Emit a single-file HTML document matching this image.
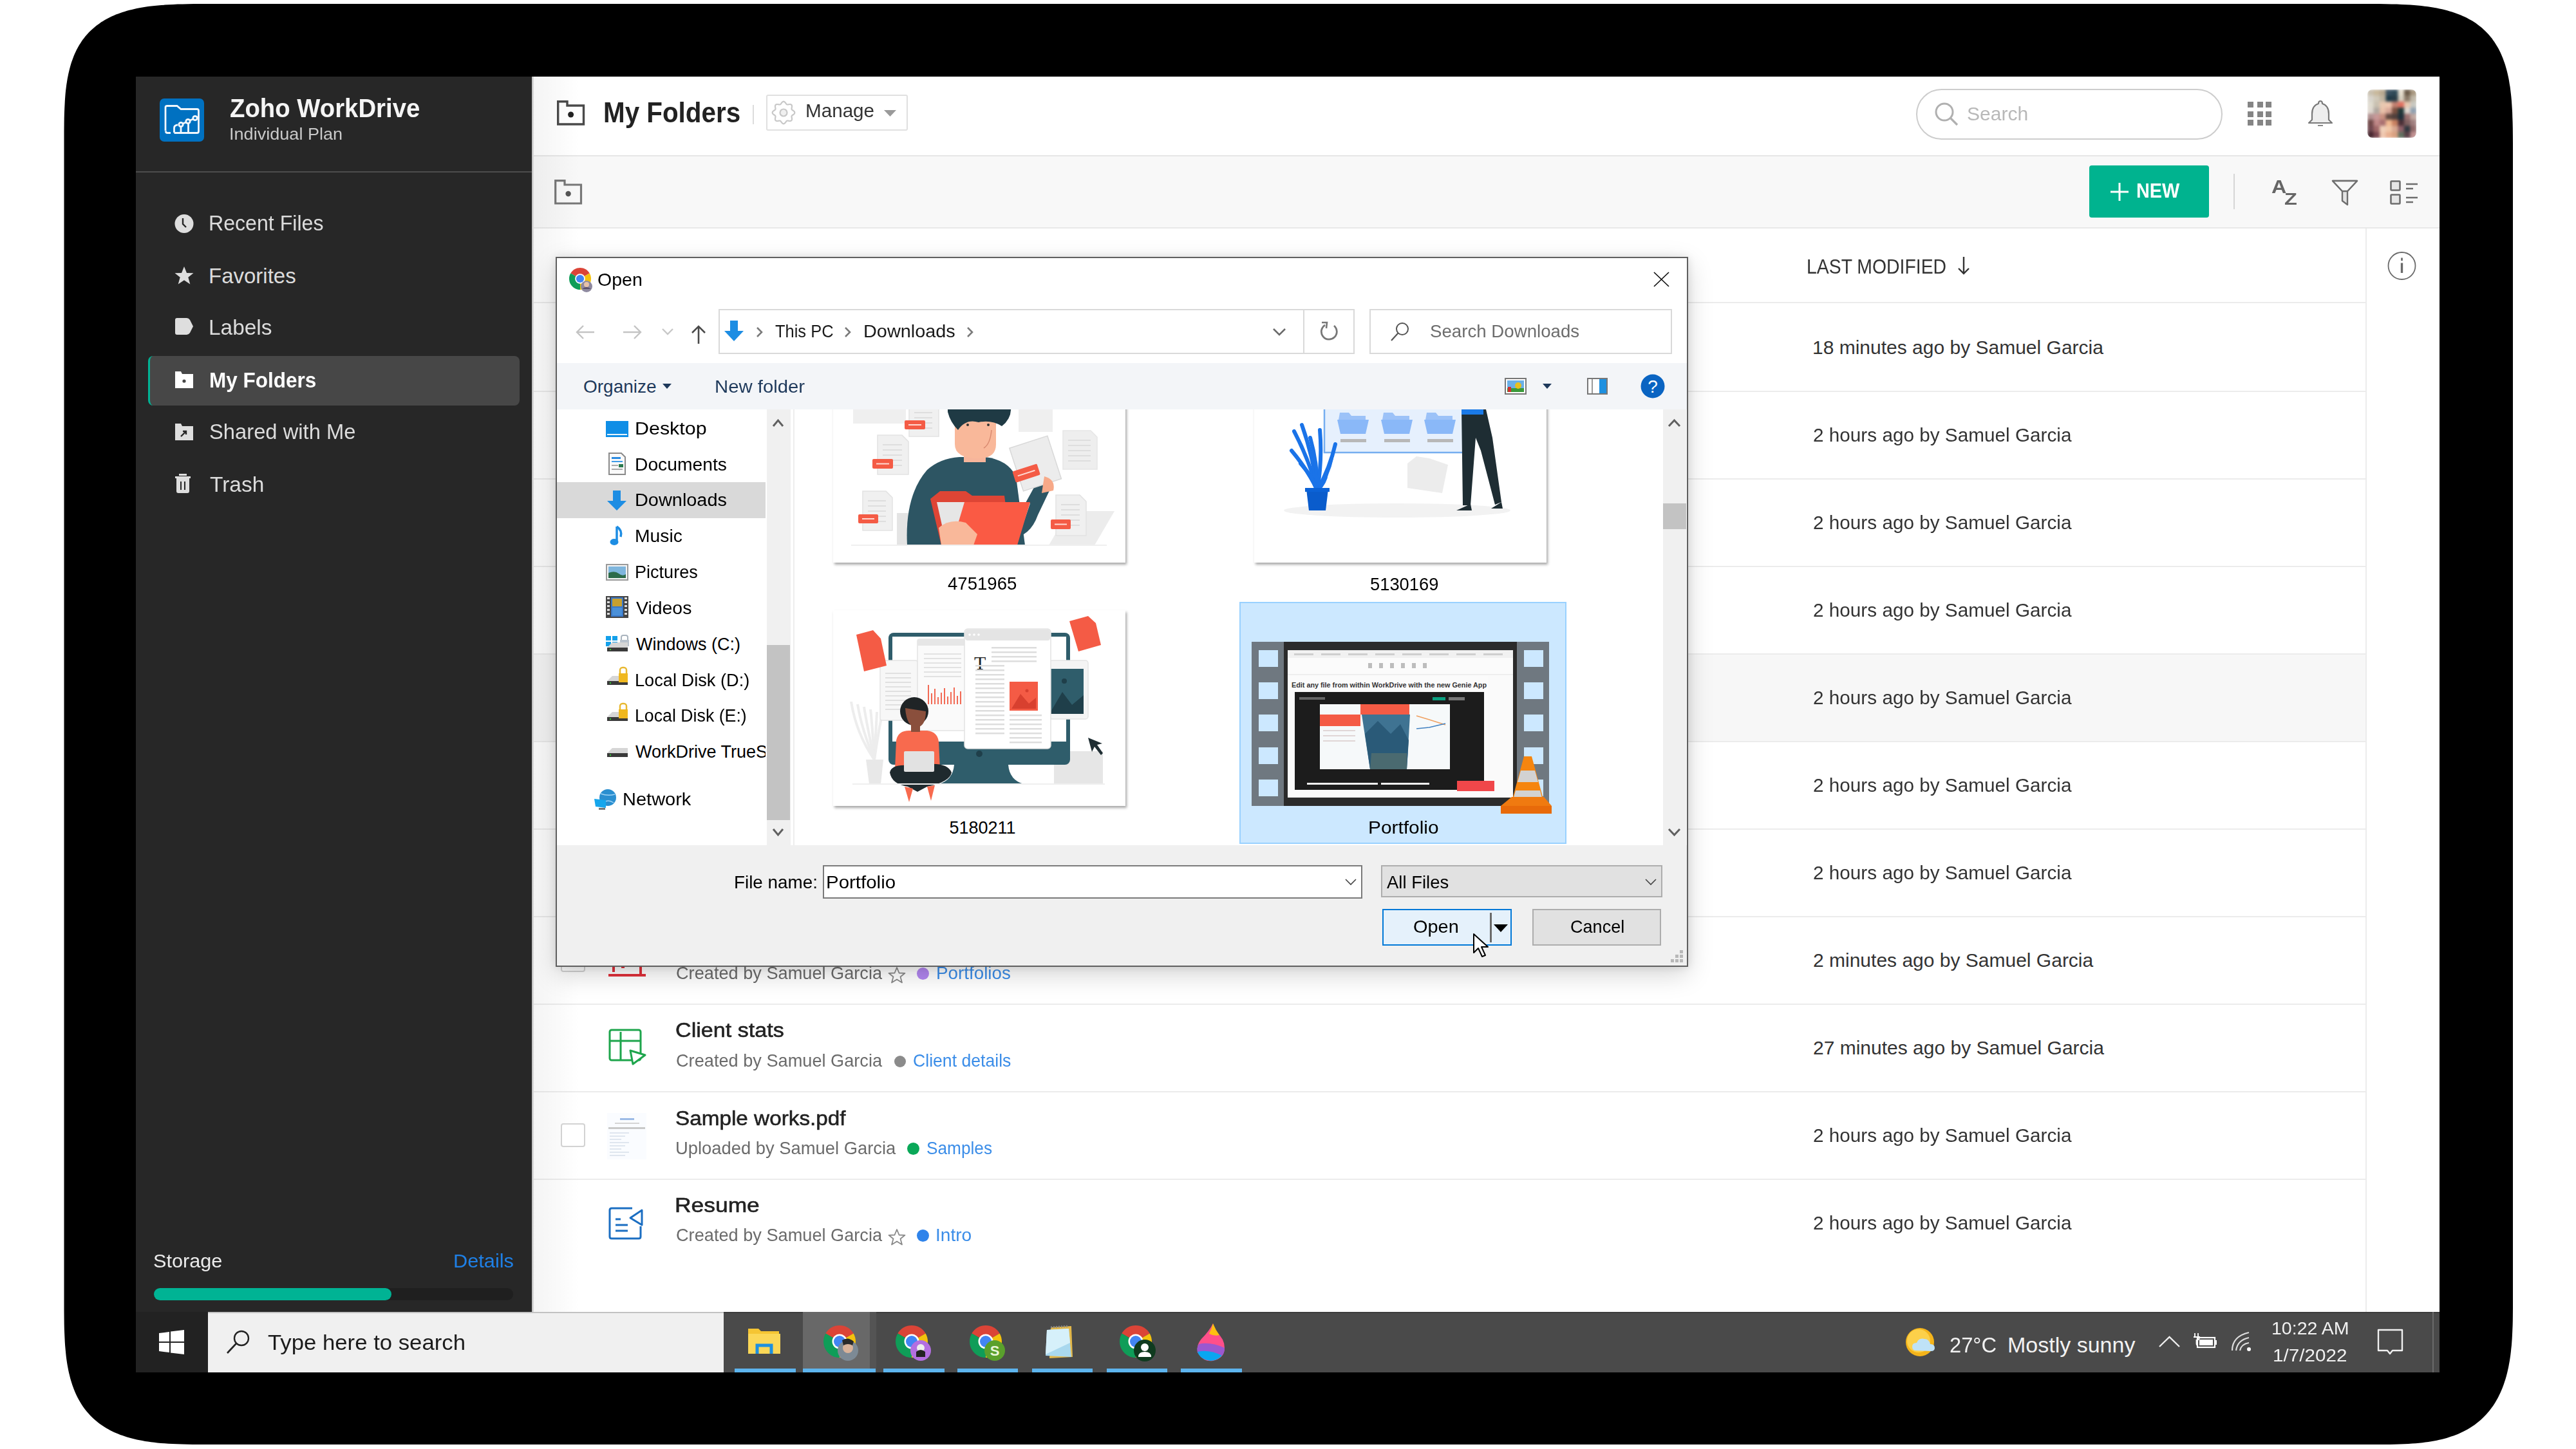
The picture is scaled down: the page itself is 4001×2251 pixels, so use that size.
<!DOCTYPE html>
<html><head><meta charset="utf-8"><title>Zoho WorkDrive - Open</title>
<style>
html,body{margin:0;padding:0;background:#fff;width:4001px;height:2251px;overflow:hidden;}
body{position:relative;font-family:"Liberation Sans",sans-serif;}
.a{position:absolute;}
.t{position:absolute;white-space:nowrap;line-height:1;transform-origin:0 0;}
svg.a{overflow:visible;}
</style></head><body>
<svg class="a" style="left:0px;top:0px;" width="4001" height="2251" viewBox="0 0 4001 2251"><path d="M99.5 228.0 L99.5 204.5 L99.6 193.1 L99.7 184.0 L99.9 176.2 L100.2 169.1 L100.5 162.7 L100.8 156.7 L101.2 151.1 L101.6 145.8 L102.1 140.7 L102.7 135.9 L103.3 131.3 L104.0 126.9 L104.7 122.6 L105.5 118.5 L106.3 114.5 L107.2 110.7 L108.1 106.9 L109.1 103.3 L110.1 99.8 L111.2 96.3 L112.4 93.0 L113.6 89.8 L114.8 86.6 L116.1 83.6 L117.5 80.6 L118.9 77.6 L120.4 74.8 L121.9 72.0 L123.5 69.3 L125.2 66.7 L126.9 64.1 L128.6 61.6 L130.5 59.2 L132.3 56.8 L134.3 54.5 L136.3 52.3 L138.3 50.1 L140.4 48.0 L142.6 45.9 L144.9 43.9 L147.2 41.9 L149.5 40.0 L152.0 38.2 L154.5 36.4 L157.0 34.6 L159.7 33.0 L162.4 31.3 L165.1 29.7 L168.0 28.2 L170.9 26.7 L173.9 25.3 L177.0 24.0 L180.1 22.6 L183.3 21.4 L186.7 20.2 L190.1 19.0 L193.6 17.9 L197.2 16.8 L200.9 15.8 L204.7 14.9 L208.6 13.9 L212.7 13.1 L216.8 12.3 L221.1 11.5 L225.6 10.8 L230.2 10.1 L235.0 9.5 L240.0 9.0 L245.2 8.4 L250.6 8.0 L256.4 7.6 L262.4 7.2 L268.9 6.9 L275.8 6.6 L283.4 6.4 L291.9 6.2 L301.8 6.1 L314.1 6.0 L339.5 6.0 L3651.0 6.0 L3681.1 6.0 L3694.8 6.1 L3705.5 6.2 L3714.7 6.4 L3722.8 6.6 L3730.2 6.9 L3737.1 7.3 L3743.4 7.6 L3749.5 8.1 L3755.2 8.6 L3760.6 9.1 L3765.8 9.7 L3770.8 10.3 L3775.5 11.0 L3780.1 11.8 L3784.6 12.6 L3788.9 13.4 L3793.0 14.3 L3797.0 15.3 L3800.9 16.3 L3804.7 17.4 L3808.4 18.5 L3812.0 19.7 L3815.4 20.9 L3818.8 22.2 L3822.1 23.5 L3825.3 24.9 L3828.4 26.3 L3831.5 27.8 L3834.4 29.4 L3837.3 31.0 L3840.1 32.6 L3842.8 34.3 L3845.5 36.1 L3848.0 38.0 L3850.6 39.9 L3853.0 41.8 L3855.4 43.8 L3857.7 45.9 L3859.9 48.0 L3862.1 50.2 L3864.3 52.5 L3866.3 54.8 L3868.3 57.2 L3870.3 59.6 L3872.1 62.2 L3874.0 64.8 L3875.7 67.4 L3877.4 70.2 L3879.1 73.0 L3880.7 75.8 L3882.2 78.8 L3883.7 81.8 L3885.1 85.0 L3886.5 88.2 L3887.8 91.5 L3889.0 94.9 L3890.2 98.3 L3891.4 101.9 L3892.4 105.6 L3893.5 109.4 L3894.5 113.4 L3895.4 117.4 L3896.3 121.6 L3897.1 125.9 L3897.8 130.4 L3898.6 135.1 L3899.2 139.9 L3899.8 145.0 L3900.4 150.3 L3900.9 155.9 L3901.3 161.8 L3901.7 168.0 L3902.1 174.7 L3902.3 181.9 L3902.6 189.8 L3902.8 198.8 L3902.9 209.3 L3903.0 222.6 L3903.0 252.0 L3903.0 2012.0 L3903.0 2031.9 L3902.9 2042.7 L3902.8 2051.5 L3902.6 2059.3 L3902.3 2066.3 L3902.0 2072.9 L3901.7 2079.0 L3901.3 2084.8 L3900.9 2090.3 L3900.3 2095.5 L3899.8 2100.6 L3899.2 2105.5 L3898.5 2110.2 L3897.8 2114.7 L3897.0 2119.1 L3896.2 2123.4 L3895.3 2127.5 L3894.4 2131.5 L3893.4 2135.5 L3892.4 2139.3 L3891.3 2143.0 L3890.1 2146.6 L3888.9 2150.2 L3887.7 2153.6 L3886.4 2157.0 L3885.0 2160.3 L3883.6 2163.5 L3882.1 2166.6 L3880.6 2169.7 L3879.0 2172.7 L3877.4 2175.6 L3875.7 2178.4 L3874.0 2181.2 L3872.2 2183.9 L3870.3 2186.6 L3868.4 2189.1 L3866.4 2191.7 L3864.4 2194.1 L3862.3 2196.5 L3860.2 2198.8 L3858.0 2201.1 L3855.7 2203.3 L3853.4 2205.4 L3851.0 2207.5 L3848.5 2209.5 L3846.0 2211.5 L3843.5 2213.4 L3840.8 2215.2 L3838.1 2217.0 L3835.4 2218.7 L3832.5 2220.4 L3829.6 2222.0 L3826.7 2223.5 L3823.6 2225.0 L3820.5 2226.5 L3817.3 2227.9 L3814.0 2229.2 L3810.7 2230.4 L3807.2 2231.6 L3803.7 2232.8 L3800.1 2233.9 L3796.4 2234.9 L3792.5 2235.9 L3788.6 2236.8 L3784.6 2237.7 L3780.4 2238.5 L3776.1 2239.3 L3771.6 2240.0 L3767.0 2240.6 L3762.2 2241.2 L3757.2 2241.7 L3752.0 2242.2 L3746.5 2242.6 L3740.7 2243.0 L3734.5 2243.3 L3727.8 2243.6 L3720.5 2243.7 L3712.1 2243.9 L3701.9 2244.0 L3683.0 2244.0 L334.5 2244.0 L311.2 2244.0 L299.5 2243.9 L290.1 2243.8 L281.9 2243.6 L274.6 2243.3 L267.8 2243.1 L261.5 2242.7 L255.6 2242.3 L250.0 2241.9 L244.6 2241.4 L239.5 2240.8 L234.6 2240.2 L229.9 2239.6 L225.4 2238.9 L221.0 2238.1 L216.7 2237.3 L212.6 2236.4 L208.6 2235.5 L204.7 2234.6 L200.9 2233.5 L197.3 2232.5 L193.7 2231.3 L190.2 2230.1 L186.8 2228.9 L183.5 2227.6 L180.3 2226.3 L177.2 2224.9 L174.1 2223.4 L171.1 2221.9 L168.2 2220.3 L165.4 2218.7 L162.6 2217.0 L159.9 2215.3 L157.3 2213.5 L154.7 2211.7 L152.2 2209.8 L149.8 2207.8 L147.4 2205.8 L145.1 2203.7 L142.8 2201.6 L140.7 2199.4 L138.5 2197.1 L136.5 2194.8 L134.5 2192.4 L132.5 2190.0 L130.6 2187.5 L128.8 2184.9 L127.0 2182.3 L125.3 2179.5 L123.7 2176.8 L122.1 2173.9 L120.5 2171.0 L119.0 2168.0 L117.6 2164.9 L116.2 2161.8 L114.9 2158.5 L113.7 2155.2 L112.4 2151.8 L111.3 2148.3 L110.2 2144.7 L109.1 2141.0 L108.2 2137.2 L107.2 2133.3 L106.3 2129.3 L105.5 2125.1 L104.7 2120.8 L104.0 2116.4 L103.3 2111.7 L102.7 2106.9 L102.2 2101.9 L101.7 2096.7 L101.2 2091.2 L100.8 2085.4 L100.5 2079.3 L100.2 2072.7 L99.9 2065.5 L99.7 2057.5 L99.6 2048.2 L99.5 2036.8 L99.5 2014.0 Z" fill="#000"/></svg>
<div class="a" style="left:211px;top:119px;width:615px;height:1919px;background:#272727;"></div>
<div class="a" style="left:248px;top:153px;width:69px;height:67px;background:#0071c1;border-radius:7px;"></div>
<svg class="a" style="left:248px;top:153px;" width="69" height="67" viewBox="0 0 69 67"><g fill="none" stroke="#f2f7fc" stroke-width="2.8"><path d="M9 50 V14 Q9 11.5 11.5 11.5 H27 L33 16.5 H58 Q60.5 16.5 60.5 19 V51 Q60.5 53.5 58 53.5 H22.5"/><path d="M9.2 50.5 Q9.5 53.5 12 53.5 H17"/><path d="M22.5 53 V46 Q22.5 41.5 28 41"/><circle cx="33" cy="40.5" r="3.2"/><circle cx="44" cy="35.5" r="3.2"/><circle cx="55" cy="30.5" r="3.2"/><path d="M36 39 L41 37 M47 34 L52 32 M58 29.5 L60 28.5"/><path d="M33 44 V53 M44.5 39 V53"/></g></svg>
<div class="t" style="left:357.0px;top:148.1px;font-size:40px;color:#f5f5f5;font-weight:700;transform:scaleX(0.9582);">Zoho WorkDrive</div>
<div class="t" style="left:355.8px;top:195.8px;font-size:25px;color:#c9c9c9;font-weight:400;transform:scaleX(1.0830);">Individual Plan</div>
<div class="a" style="left:211px;top:266px;width:615px;height:2px;background:#4d4d4d;"></div>
<div class="a" style="left:230px;top:553px;width:577px;height:77px;background:#474747;border-radius:8px;border-left:3px solid #00b394;box-sizing:border-box;"></div>
<div class="t" style="left:324.1px;top:330.1px;font-size:33px;color:#dcdcdc;font-weight:400;transform:scaleX(0.9733);">Recent Files</div>
<div class="t" style="left:324.0px;top:412.1px;font-size:33px;color:#dcdcdc;font-weight:400;">Favorites</div>
<div class="t" style="left:324.0px;top:492.1px;font-size:33px;color:#dcdcdc;font-weight:400;transform:scaleX(1.0129);">Labels</div>
<div class="t" style="left:325.1px;top:574.1px;font-size:33px;color:#ffffff;font-weight:700;transform:scaleX(0.9544);">My Folders</div>
<div class="t" style="left:325.0px;top:654.1px;font-size:33px;color:#dcdcdc;font-weight:400;transform:scaleX(0.9920);">Shared with Me</div>
<div class="t" style="left:326.0px;top:736.1px;font-size:33px;color:#dcdcdc;font-weight:400;transform:scaleX(1.0150);">Trash</div>
<svg class="a" style="left:271px;top:331px;" width="30" height="33" viewBox="0 0 30 33"><circle cx="15" cy="16.5" r="14.5" fill="#dedede"/><path d="M13 8 V17 L18 22" stroke="#262626" stroke-width="2.4" fill="none"/></svg>
<svg class="a" style="left:271px;top:413px;" width="30" height="30" viewBox="0 0 30 30"><path d="M15 1 L19 11 L29.5 11.3 L21.3 17.8 L24.3 28.5 L15 22.3 L5.7 28.5 L8.7 17.8 L0.5 11.3 L11 11 Z" fill="#dedede"/></svg>
<svg class="a" style="left:272px;top:494px;" width="29" height="26" viewBox="0 0 29 26"><path d="M0 3 Q0 0 3 0 H18 Q21 0 23 3 L28 13 L23 23 Q21 26 18 26 H3 Q0 26 0 23 Z" fill="#dedede"/></svg>
<svg class="a" style="left:272px;top:577px;" width="28" height="26" viewBox="0 0 28 26"><path d="M0 0 H9 L11 4 H28 V26 H0 Z" fill="#fff"/><circle cx="14" cy="15" r="2.6" fill="#474747"/></svg>
<svg class="a" style="left:272px;top:658px;" width="28" height="26" viewBox="0 0 28 26"><path d="M0 0 H9 L11 4 H28 V26 H0 Z" fill="#dedede"/><path d="M9 20 L17 12 M12 12 H17 V17" stroke="#262626" stroke-width="2.4" fill="none"/></svg>
<svg class="a" style="left:272px;top:736px;" width="24" height="30" viewBox="0 0 24 30"><rect x="6" y="0" width="12" height="3" fill="#dedede"/><rect x="0" y="4" width="24" height="3" fill="#dedede"/><path d="M2 7 H22 V27 Q22 30 19 30 H5 Q2 30 2 27 Z" fill="#dedede"/><path d="M9 12 V25 M15 12 V25" stroke="#262626" stroke-width="2"/></svg>
<div class="t" style="left:238.0px;top:1943.6px;font-size:30px;color:#ececec;font-weight:400;transform:scaleX(1.0214);">Storage</div>
<div class="t" style="left:703.8px;top:1943.6px;font-size:30px;color:#1f80e6;font-weight:400;transform:scaleX(1.0247);">Details</div>
<div class="a" style="left:239px;top:2001px;width:558px;height:19px;background:#1f1f1f;border-radius:10px;"></div>
<div class="a" style="left:239px;top:2001px;width:369px;height:19px;background:#00b394;border-radius:10px;"></div>
<div class="a" style="left:826px;top:119px;width:2963px;height:1919px;background:#fff;"></div>
<div class="a" style="left:826px;top:241px;width:2963px;height:2px;background:#e6e6e6;"></div>
<div class="a" style="left:826px;top:243px;width:2963px;height:110px;background:#f8f8f8;"></div>
<div class="a" style="left:826px;top:353px;width:2963px;height:2px;background:#e8e8e8;"></div>
<svg class="a" style="left:865px;top:156px;" width="44" height="39" viewBox="0 0 44 39"><path d="M1.7 1.7 H16 V8 H41.5 V37 H1.7 Z" fill="none" stroke="#4a4a4a" stroke-width="3.4"/><circle cx="21.6" cy="22" r="4.5" fill="#222"/></svg>
<svg class="a" style="left:861px;top:279px;" width="44" height="39" viewBox="0 0 44 39"><path d="M1.7 1.7 H16 V8 H41.5 V37 H1.7 Z" fill="none" stroke="#777" stroke-width="3.2"/><circle cx="21.6" cy="22" r="4.2" fill="#555"/></svg>
<div class="t" style="left:937.2px;top:152.7px;font-size:44px;color:#222;font-weight:700;transform:scaleX(0.9175);">My Folders</div>
<div class="a" style="left:1169px;top:163px;width:2px;height:30px;background:#dcdcdc;"></div>
<div class="a" style="left:1190px;top:147px;width:220px;height:56px;border:2px solid #e0e0e0;border-radius:3px;box-sizing:border-box;background:#fff;"></div>
<svg class="a" style="left:1199px;top:157px;" width="36" height="36" viewBox="0 0 36 36"><path d="M35.30 18.00 L35.20 18.68 L34.90 19.33 L34.44 19.95 L33.86 20.51 L33.20 21.02 L32.53 21.49 L31.90 21.92 L31.36 22.34 L30.94 22.77 L30.66 23.24 L30.52 23.77 L30.51 24.38 L30.60 25.06 L30.74 25.81 L30.89 26.61 L30.99 27.44 L31.00 28.25 L30.89 29.01 L30.64 29.68 L30.23 30.23 L29.68 30.64 L29.01 30.89 L28.25 31.00 L27.44 30.99 L26.61 30.89 L25.81 30.74 L25.06 30.60 L24.38 30.51 L23.77 30.52 L23.24 30.66 L22.77 30.94 L22.34 31.36 L21.92 31.90 L21.49 32.53 L21.02 33.20 L20.51 33.86 L19.95 34.44 L19.33 34.90 L18.68 35.20 L18.00 35.30 L17.32 35.20 L16.67 34.90 L16.05 34.44 L15.49 33.86 L14.98 33.20 L14.51 32.53 L14.08 31.90 L13.66 31.36 L13.23 30.94 L12.76 30.66 L12.23 30.52 L11.62 30.51 L10.94 30.60 L10.19 30.74 L9.39 30.89 L8.56 30.99 L7.75 31.00 L6.99 30.89 L6.32 30.64 L5.77 30.23 L5.36 29.68 L5.11 29.01 L5.00 28.25 L5.01 27.44 L5.11 26.61 L5.26 25.81 L5.40 25.06 L5.49 24.38 L5.48 23.77 L5.34 23.24 L5.06 22.77 L4.64 22.34 L4.10 21.92 L3.47 21.49 L2.80 21.02 L2.14 20.51 L1.56 19.95 L1.10 19.33 L0.80 18.68 L0.70 18.00 L0.80 17.32 L1.10 16.67 L1.56 16.05 L2.14 15.49 L2.80 14.98 L3.47 14.51 L4.10 14.08 L4.64 13.66 L5.06 13.23 L5.34 12.76 L5.48 12.23 L5.49 11.62 L5.40 10.94 L5.26 10.19 L5.11 9.39 L5.01 8.56 L5.00 7.75 L5.11 6.99 L5.36 6.32 L5.77 5.77 L6.32 5.36 L6.99 5.11 L7.75 5.00 L8.56 5.01 L9.39 5.11 L10.19 5.26 L10.94 5.40 L11.62 5.49 L12.23 5.48 L12.76 5.34 L13.23 5.06 L13.66 4.64 L14.08 4.10 L14.51 3.47 L14.98 2.80 L15.49 2.14 L16.05 1.56 L16.67 1.10 L17.32 0.80 L18.00 0.70 L18.68 0.80 L19.33 1.10 L19.95 1.56 L20.51 2.14 L21.02 2.80 L21.49 3.47 L21.92 4.10 L22.34 4.64 L22.77 5.06 L23.24 5.34 L23.77 5.48 L24.38 5.49 L25.06 5.40 L25.81 5.26 L26.61 5.11 L27.44 5.01 L28.25 5.00 L29.01 5.11 L29.68 5.36 L30.23 5.77 L30.64 6.32 L30.89 6.99 L31.00 7.75 L30.99 8.56 L30.89 9.39 L30.74 10.19 L30.60 10.94 L30.51 11.62 L30.52 12.23 L30.66 12.76 L30.94 13.23 L31.36 13.66 L31.90 14.08 L32.53 14.51 L33.20 14.98 L33.86 15.49 L34.44 16.05 L34.90 16.67 L35.20 17.32 Z" fill="none" stroke="#c8c8c8" stroke-width="2.2"/><circle cx="18" cy="18" r="5.5" fill="#f0f0f0" stroke="#c8c8c8" stroke-width="2.2"/></svg>
<div class="t" style="left:1251.0px;top:158.4px;font-size:29px;color:#333;font-weight:400;transform:scaleX(1.0216);">Manage</div>
<svg class="a" style="left:1373px;top:171px;" width="19" height="10" viewBox="0 0 19 10"><path d="M0 0 H19 L9.5 10 Z" fill="#9a9a9a"/></svg>
<div class="a" style="left:2976px;top:138px;width:476px;height:79px;border:2px solid #cdcdcd;border-radius:40px;box-sizing:border-box;background:#fff;"></div>
<svg class="a" style="left:3004px;top:158px;" width="38" height="38" viewBox="0 0 38 38"><circle cx="16" cy="16" r="13" fill="none" stroke="#b0b0b0" stroke-width="3"/><path d="M25 25 L36 36" stroke="#b0b0b0" stroke-width="3.2"/></svg>
<div class="t" style="left:3055.0px;top:161.6px;font-size:30px;color:#b8b8b8;font-weight:400;transform:scaleX(1.0022);">Search</div>
<svg class="a" style="left:3491px;top:158px;" width="37" height="37" viewBox="0 0 37 37"><rect x="0" y="0" width="9" height="9" fill="#858585"/><rect x="15" y="0" width="9" height="9" fill="#858585"/><rect x="28" y="0" width="9" height="9" fill="#858585"/><rect x="0" y="15" width="9" height="9" fill="#858585"/><rect x="15" y="15" width="9" height="9" fill="#858585"/><rect x="28" y="15" width="9" height="9" fill="#858585"/><rect x="0" y="28" width="9" height="9" fill="#858585"/><rect x="15" y="28" width="9" height="9" fill="#858585"/><rect x="28" y="28" width="9" height="9" fill="#858585"/></svg>
<svg class="a" style="left:3584px;top:153px;" width="40" height="44" viewBox="0 0 40 44"><path d="M20 4 Q23 4 23 8 Q33 11 33 24 V33 L38 38 H2 L7 33 V24 Q7 11 17 8 Q17 4 20 4 Z" fill="#eeeeee" stroke="#7a7a7a" stroke-width="2.2" stroke-linejoin="round"/><path d="M16 42 H24" stroke="#888" stroke-width="2"/></svg>
<div class="a" style="left:3677px;top:139px;width:76px;height:75px;border-radius:8px;overflow:hidden;">
<svg class="a" style="left:-4px;top:-4px;filter:blur(2px);" width="84" height="83" viewBox="-4 -4 84 83"><g><rect x="0.0" y="0.0" width="10" height="10" fill="#c9c0b0"/><rect x="9.5" y="0.0" width="10" height="10" fill="#c8b89c"/><rect x="19.0" y="0.0" width="10" height="10" fill="#b8a890"/><rect x="28.5" y="0.0" width="10" height="10" fill="#3a5060"/><rect x="38.0" y="0.0" width="10" height="10" fill="#2f4a58"/><rect x="47.5" y="0.0" width="10" height="10" fill="#e8e0d0"/><rect x="57.0" y="0.0" width="10" height="10" fill="#6a5a48"/><rect x="66.5" y="0.0" width="10" height="10" fill="#a89880"/><rect x="0.0" y="9.4" width="10" height="10" fill="#d8d4cc"/><rect x="9.5" y="9.4" width="10" height="10" fill="#d0c8b8"/><rect x="19.0" y="9.4" width="10" height="10" fill="#c0b4a0"/><rect x="28.5" y="9.4" width="10" height="10" fill="#1f3a48"/><rect x="38.0" y="9.4" width="10" height="10" fill="#2a3e48"/><rect x="47.5" y="9.4" width="10" height="10" fill="#d8d0c0"/><rect x="57.0" y="9.4" width="10" height="10" fill="#8a7a68"/><rect x="66.5" y="9.4" width="10" height="10" fill="#c0b8a8"/><rect x="0.0" y="18.8" width="10" height="10" fill="#e0dcd0"/><rect x="9.5" y="18.8" width="10" height="10" fill="#c8c0b0"/><rect x="19.0" y="18.8" width="10" height="10" fill="#e8c8b0"/><rect x="28.5" y="18.8" width="10" height="10" fill="#f0c8b0"/><rect x="38.0" y="18.8" width="10" height="10" fill="#c08070"/><rect x="47.5" y="18.8" width="10" height="10" fill="#e07060"/><rect x="57.0" y="18.8" width="10" height="10" fill="#e8c8b0"/><rect x="66.5" y="18.8" width="10" height="10" fill="#c8c8c0"/><rect x="0.0" y="28.2" width="10" height="10" fill="#e0d8d0"/><rect x="9.5" y="28.2" width="10" height="10" fill="#b0a8a0"/><rect x="19.0" y="28.2" width="10" height="10" fill="#e8c0a8"/><rect x="28.5" y="28.2" width="10" height="10" fill="#d8a898"/><rect x="38.0" y="28.2" width="10" height="10" fill="#7a5040"/><rect x="47.5" y="28.2" width="10" height="10" fill="#203838"/><rect x="57.0" y="28.2" width="10" height="10" fill="#e0d8d0"/><rect x="66.5" y="28.2" width="10" height="10" fill="#90a0b0"/><rect x="0.0" y="37.6" width="10" height="10" fill="#b09090"/><rect x="9.5" y="37.6" width="10" height="10" fill="#c89898"/><rect x="19.0" y="37.6" width="10" height="10" fill="#c89080"/><rect x="28.5" y="37.6" width="10" height="10" fill="#604840"/><rect x="38.0" y="37.6" width="10" height="10" fill="#50403c"/><rect x="47.5" y="37.6" width="10" height="10" fill="#20303a"/><rect x="57.0" y="37.6" width="10" height="10" fill="#9a7070"/><rect x="66.5" y="37.6" width="10" height="10" fill="#c0a8a0"/><rect x="0.0" y="47.0" width="10" height="10" fill="#704848"/><rect x="9.5" y="47.0" width="10" height="10" fill="#c08888"/><rect x="19.0" y="47.0" width="10" height="10" fill="#a87070"/><rect x="28.5" y="47.0" width="10" height="10" fill="#f0b890"/><rect x="38.0" y="47.0" width="10" height="10" fill="#c88060"/><rect x="47.5" y="47.0" width="10" height="10" fill="#4a3038"/><rect x="57.0" y="47.0" width="10" height="10" fill="#806060"/><rect x="66.5" y="47.0" width="10" height="10" fill="#a08080"/><rect x="0.0" y="56.4" width="10" height="10" fill="#704850"/><rect x="9.5" y="56.4" width="10" height="10" fill="#a06868"/><rect x="19.0" y="56.4" width="10" height="10" fill="#f0d0b8"/><rect x="28.5" y="56.4" width="10" height="10" fill="#f0c8a8"/><rect x="38.0" y="56.4" width="10" height="10" fill="#d8a890"/><rect x="47.5" y="56.4" width="10" height="10" fill="#906068"/><rect x="57.0" y="56.4" width="10" height="10" fill="#303840"/><rect x="66.5" y="56.4" width="10" height="10" fill="#906868"/><rect x="0.0" y="65.8" width="10" height="10" fill="#482830"/><rect x="9.5" y="65.8" width="10" height="10" fill="#7a4850"/><rect x="19.0" y="65.8" width="10" height="10" fill="#f0c8b0"/><rect x="28.5" y="65.8" width="10" height="10" fill="#e8b090"/><rect x="38.0" y="65.8" width="10" height="10" fill="#d8a080"/><rect x="47.5" y="65.8" width="10" height="10" fill="#607060"/><rect x="57.0" y="65.8" width="10" height="10" fill="#5a4048"/><rect x="66.5" y="65.8" width="10" height="10" fill="#c09090"/></g></svg>
</div>
<div class="a" style="left:3245px;top:257px;width:186px;height:81px;background:#00b38f;border-radius:4px;"></div>
<svg class="a" style="left:3278px;top:284px;" width="28" height="28" viewBox="0 0 28 28"><path d="M14 0 V28 M0 14 H28" stroke="#fff" stroke-width="3"/></svg>
<div class="t" style="left:3318.1px;top:280.8px;font-size:31px;color:#fff;font-weight:700;transform:scaleX(0.9314);">NEW</div>
<div class="a" style="left:3469px;top:270px;width:2px;height:55px;background:#d6d6d6;"></div>
<div class="t" style="left:3527.9px;top:276.4px;font-size:29px;color:#666;font-weight:700;transform:scaleX(1.1158);">A</div>
<div class="t" style="left:3547.7px;top:296.8px;font-size:25px;color:#666;font-weight:700;transform:scaleX(1.3000);">Z</div>
<svg class="a" style="left:3622px;top:280px;" width="40" height="40" viewBox="0 0 40 40"><path d="M1 1 H39 L24 17 V38 L16 32 V17 Z" fill="#e4e4e4" stroke="#6e6e6e" stroke-width="2.4" stroke-linejoin="round"/><path d="M1 1 H39 L24 17 H16 Z" fill="#f7f8f8" stroke="#6e6e6e" stroke-width="2.4" stroke-linejoin="round"/></svg>
<svg class="a" style="left:3712px;top:280px;" width="44" height="38" viewBox="0 0 44 38"><rect x="1.5" y="1.5" width="14" height="14" rx="1" fill="#e6e6e6" stroke="#6e6e6e" stroke-width="2.6"/><rect x="1.5" y="22.5" width="14" height="14" rx="1" fill="#e6e6e6" stroke="#6e6e6e" stroke-width="2.6"/><path d="M25 6 H43 M25 13 H36 M25 27 H43 M25 34 H36" stroke="#6e6e6e" stroke-width="2.6"/></svg>
<div class="a" style="left:3674px;top:355px;width:2px;height:1683px;background:#ececec;"></div>
<svg class="a" style="left:3706px;top:389px;" width="50" height="49" viewBox="0 0 50 49"><circle cx="24.5" cy="24" r="21" fill="none" stroke="#6a6a6a" stroke-width="1.8"/><path d="M24.5 11.5 V16" stroke="#666" stroke-width="2.6"/><path d="M24.5 19.5 V35" stroke="#6a6a6a" stroke-width="3.4"/></svg>
<div class="t" style="left:2806.2px;top:398.8px;font-size:31px;color:#333;font-weight:400;transform:scaleX(0.9154);">LAST MODIFIED</div>
<svg class="a" style="left:3040px;top:398px;" width="20" height="30" viewBox="0 0 20 30"><path d="M10 1 V27 M2 19 L10 27 L18 19" fill="none" stroke="#333" stroke-width="2.4"/></svg>
<div class="a" style="left:826px;top:469px;width:2848px;height:2px;background:#ececec;"></div>
<div class="a" style="left:826px;top:1016px;width:2848px;height:136px;background:#f7f7f7;"></div>
<div class="a" style="left:826px;top:607px;width:2848px;height:2px;background:#ececec;"></div>
<div class="a" style="left:826px;top:743px;width:2848px;height:2px;background:#ececec;"></div>
<div class="a" style="left:826px;top:879px;width:2848px;height:2px;background:#ececec;"></div>
<div class="a" style="left:826px;top:1015px;width:2848px;height:2px;background:#ececec;"></div>
<div class="a" style="left:826px;top:1151px;width:2848px;height:2px;background:#ececec;"></div>
<div class="a" style="left:826px;top:1287px;width:2848px;height:2px;background:#ececec;"></div>
<div class="a" style="left:826px;top:1423px;width:2848px;height:2px;background:#ececec;"></div>
<div class="a" style="left:826px;top:1559px;width:2848px;height:2px;background:#ececec;"></div>
<div class="a" style="left:826px;top:1695px;width:2848px;height:2px;background:#ececec;"></div>
<div class="a" style="left:826px;top:1831px;width:2848px;height:2px;background:#ececec;"></div>
<div class="t" style="left:2815.0px;top:524.6px;font-size:30px;color:#333;font-weight:400;">18 minutes ago by Samuel Garcia</div>
<div class="t" style="left:2816.0px;top:660.6px;font-size:30px;color:#333;font-weight:400;transform:scaleX(0.9906);">2 hours ago by Samuel Garcia</div>
<div class="t" style="left:2816.0px;top:796.6px;font-size:30px;color:#333;font-weight:400;transform:scaleX(0.9906);">2 hours ago by Samuel Garcia</div>
<div class="t" style="left:2816.0px;top:932.6px;font-size:30px;color:#333;font-weight:400;transform:scaleX(0.9906);">2 hours ago by Samuel Garcia</div>
<div class="t" style="left:2816.0px;top:1068.6px;font-size:30px;color:#333;font-weight:400;transform:scaleX(0.9906);">2 hours ago by Samuel Garcia</div>
<div class="t" style="left:2816.0px;top:1204.6px;font-size:30px;color:#333;font-weight:400;transform:scaleX(0.9906);">2 hours ago by Samuel Garcia</div>
<div class="t" style="left:2816.0px;top:1340.6px;font-size:30px;color:#333;font-weight:400;transform:scaleX(0.9906);">2 hours ago by Samuel Garcia</div>
<div class="t" style="left:2816.0px;top:1476.6px;font-size:30px;color:#333;font-weight:400;">2 minutes ago by Samuel Garcia</div>
<div class="t" style="left:2816.0px;top:1612.6px;font-size:30px;color:#333;font-weight:400;">27 minutes ago by Samuel Garcia</div>
<div class="t" style="left:2816.0px;top:1748.6px;font-size:30px;color:#333;font-weight:400;transform:scaleX(0.9906);">2 hours ago by Samuel Garcia</div>
<div class="t" style="left:2816.0px;top:1884.6px;font-size:30px;color:#333;font-weight:400;transform:scaleX(0.9906);">2 hours ago by Samuel Garcia</div>
<div class="a" style="left:826px;top:119px;width:3px;height:1919px;background:linear-gradient(to right,#b8b8b8,#e2e2e2);"></div>
<div class="a" style="left:829px;top:119px;width:71px;height:1919px;background:linear-gradient(to right,rgba(0,0,0,0.045),rgba(0,0,0,0));"></div>
<div class="a" style="left:871px;top:1473px;width:38px;height:37px;border:2px solid #d2d2d2;border-radius:4px;box-sizing:border-box;background:#fff;"></div>
<div class="a" style="left:945px;top:1513px;width:58px;height:4px;background:#e0303a;"></div>
<div class="a" style="left:951px;top:1500px;width:4px;height:10px;background:#e0303a;"></div>
<div class="a" style="left:993px;top:1500px;width:4px;height:15px;background:#e0303a;"></div>
<div class="a" style="left:965px;top:1500px;width:5px;height:4px;background:#e0303a;"></div>
<div class="t" style="left:1050.0px;top:1498.3px;font-size:28px;color:#6b6b6b;font-weight:400;transform:scaleX(0.9702);">Created by Samuel Garcia</div>
<svg class="a" style="left:1379px;top:1501px;" width="28" height="27" viewBox="0 0 28 27"><path d="M14 2 L17.5 10.5 L26.5 10.8 L19.5 16.5 L22 25.5 L14 20.5 L6 25.5 L8.5 16.5 L1.5 10.8 L10.5 10.5 Z" fill="none" stroke="#8a8a8a" stroke-width="1.8" stroke-linejoin="round"/></svg>
<div class="a" style="left:1424px;top:1503px;width:19px;height:19px;background:#b286f0;border-radius:50%;"></div>
<div class="t" style="left:1454.0px;top:1498.3px;font-size:28px;color:#3b8de8;font-weight:400;transform:scaleX(0.9930);">Portfolios</div>
<svg class="a" style="left:944px;top:1597px;" width="60" height="59" viewBox="0 0 60 59"><rect x="3" y="3" width="48" height="47" rx="3" fill="none" stroke="#1ea54c" stroke-width="3"/><path d="M3 20 H51 M20 6 V50" stroke="#1ea54c" stroke-width="3"/><path d="M35 35 L58 42 L39 56 Z" fill="#fff" stroke="#1ea54c" stroke-width="3" stroke-linejoin="round"/></svg>
<div class="t" style="left:1048.9px;top:1583.9px;font-size:32px;color:#222;font-weight:400;transform:scaleX(1.0658);-webkit-text-stroke:0.6px #222;">Client stats</div>
<div class="t" style="left:1050.0px;top:1634.3px;font-size:28px;color:#6b6b6b;font-weight:400;transform:scaleX(0.9702);">Created by Samuel Garcia</div>
<div class="a" style="left:1389px;top:1640px;width:18px;height:18px;background:#8b8b8b;border-radius:50%;"></div>
<div class="t" style="left:1418.0px;top:1634.3px;font-size:28px;color:#3b8de8;font-weight:400;transform:scaleX(0.9506);">Client details</div>
<div class="a" style="left:871px;top:1745px;width:38px;height:37px;border:2px solid #d2d2d2;border-radius:4px;box-sizing:border-box;background:#fff;"></div>
<svg class="a" style="left:943px;top:1729px;" width="61" height="72" viewBox="0 0 61 72"><rect x="0" y="0" width="61" height="72" fill="#fafcff"/><rect x="20" y="8" width="22" height="3" fill="#9dbbe6"/><rect x="12" y="15" width="38" height="2" fill="#d5d5d5"/><rect x="2" y="22" width="57" height="3" fill="#c9c9c9"/><rect x="4" y="30" width="30" height="2" fill="#dfe6ef"/><rect x="4" y="35" width="24" height="2" fill="#dfe6ef"/><rect x="4" y="40" width="18" height="2" fill="#dfe6ef"/><rect x="4" y="45" width="30" height="2" fill="#dfe6ef"/><rect x="4" y="50" width="24" height="2" fill="#dfe6ef"/><rect x="4" y="55" width="18" height="2" fill="#dfe6ef"/><rect x="4" y="60" width="30" height="2" fill="#dfe6ef"/><rect x="4" y="65" width="24" height="2" fill="#dfe6ef"/></svg>
<div class="t" style="left:1048.9px;top:1720.9px;font-size:32px;color:#222;font-weight:400;transform:scaleX(1.0403);-webkit-text-stroke:0.6px #222;">Sample works.pdf</div>
<div class="t" style="left:1049.0px;top:1770.3px;font-size:28px;color:#6b6b6b;font-weight:400;transform:scaleX(0.9776);">Uploaded by Samuel Garcia</div>
<div class="a" style="left:1409px;top:1775px;width:19px;height:19px;background:#0aa858;border-radius:50%;"></div>
<div class="t" style="left:1439.1px;top:1770.3px;font-size:28px;color:#3b8de8;font-weight:400;transform:scaleX(0.9364);">Samples</div>
<svg class="a" style="left:944px;top:1872px;" width="60" height="54" viewBox="0 0 60 54"><path d="M38 5 H6 Q3 5 3 8 V49 Q3 52 6 52 H48 Q51 52 51 49 V33" fill="none" stroke="#1b6ec2" stroke-width="3"/><path d="M53 8 L35 20 L53 31 Z" fill="#fff" stroke="#1b6ec2" stroke-width="3" stroke-linejoin="round"/><path d="M12 22 H20 M12 31 H31 M12 40 H31" stroke="#1b6ec2" stroke-width="3"/></svg>
<div class="t" style="left:1047.7px;top:1855.9px;font-size:32px;color:#222;font-weight:400;transform:scaleX(1.1061);-webkit-text-stroke:0.6px #222;">Resume</div>
<div class="t" style="left:1050.0px;top:1905.3px;font-size:28px;color:#6b6b6b;font-weight:400;transform:scaleX(0.9702);">Created by Samuel Garcia</div>
<svg class="a" style="left:1379px;top:1908px;" width="28" height="27" viewBox="0 0 28 27"><path d="M14 2 L17.5 10.5 L26.5 10.8 L19.5 16.5 L22 25.5 L14 20.5 L6 25.5 L8.5 16.5 L1.5 10.8 L10.5 10.5 Z" fill="none" stroke="#8a8a8a" stroke-width="1.8" stroke-linejoin="round"/></svg>
<div class="a" style="left:1424px;top:1910px;width:19px;height:19px;background:#2f83ea;border-radius:50%;"></div>
<div class="t" style="left:1453.0px;top:1905.3px;font-size:28px;color:#3b8de8;font-weight:400;transform:scaleX(1.0038);">Intro</div>
<div class="a" style="left:863px;top:399px;width:1759px;height:1103px;background:#fff;border:2px solid #5f5f5f;box-sizing:border-box;box-shadow:0 12px 36px rgba(0,0,0,0.17),0 0 12px rgba(0,0,0,0.11);"></div>
<svg class="a" style="left:884px;top:416px;" width="36" height="38" viewBox="0 0 36 38"><path d="M17 17 L2.28 8.50 A17 17 0 0 1 31.72 8.50 Z" fill="#db4437"/><path d="M17 17 L31.72 8.50 A17 17 0 0 1 17.00 34.00 Z" fill="#f4c20d"/><path d="M17 17 L17.00 34.00 A17 17 0 0 1 2.28 8.50 Z" fill="#0f9d58"/><circle cx="17" cy="17" r="7.82" fill="#fff"/><circle cx="17" cy="17" r="6.12" fill="#4285f4"/><circle cx="27" cy="29" r="9" fill="#8f8aa0"/><circle cx="27" cy="26" r="4" fill="#e7c2a8"/><path d="M20 33 Q27 27 34 33" fill="#5a4f6a"/></svg>
<div class="t" style="left:928.0px;top:421.3px;font-size:28px;color:#000;font-weight:400;transform:scaleX(1.0182);">Open</div>
<svg class="a" style="left:2567px;top:421px;" width="28" height="26" viewBox="0 0 28 26"><path d="M2 2 L25 24 M25 2 L2 24" stroke="#111" stroke-width="1.7"/></svg>
<svg class="a" style="left:893px;top:504px;" width="32" height="24" viewBox="0 0 32 24"><path d="M30 12 H3 M13 2 L3 12 L13 22" fill="none" stroke="#c4c4c4" stroke-width="2.4"/></svg>
<svg class="a" style="left:966px;top:504px;" width="32" height="24" viewBox="0 0 32 24"><path d="M2 12 H29 M19 2 L29 12 L19 22" fill="none" stroke="#c4c4c4" stroke-width="2.4"/></svg>
<svg class="a" style="left:1027px;top:509px;" width="20" height="13" viewBox="0 0 20 13"><path d="M2 2 L10 10 L18 2" fill="none" stroke="#c8c8c8" stroke-width="2.4"/></svg>
<svg class="a" style="left:1073px;top:504px;" width="24" height="30" viewBox="0 0 24 30"><path d="M12 30 V3 M2 13 L12 3 L22 13" fill="none" stroke="#4a4a4a" stroke-width="2.6"/></svg>
<div class="a" style="left:1116px;top:480px;width:988px;height:70px;border:2px solid #d9d9d9;box-sizing:border-box;background:#fff;"></div>
<div class="a" style="left:2024px;top:482px;width:2px;height:66px;background:#d9d9d9;"></div>
<svg class="a" style="left:1124px;top:498px;" width="32" height="33" viewBox="0 0 32 33"><path d="M10 0 H22 V16 H31 L16 32 L1 16 H10 Z" fill="#1d8de3"/></svg>
<svg class="a" style="left:1174px;top:507px;" width="12" height="18" viewBox="0 0 12 18"><path d="M2 2 L9 9 L2 16" fill="none" stroke="#7a7a7a" stroke-width="2.6"/></svg>
<div class="t" style="left:1204.1px;top:501.3px;font-size:28px;color:#1a1a1a;font-weight:400;transform:scaleX(0.9093);">This PC</div>
<svg class="a" style="left:1311px;top:507px;" width="12" height="18" viewBox="0 0 12 18"><path d="M2 2 L9 9 L2 16" fill="none" stroke="#7a7a7a" stroke-width="2.6"/></svg>
<div class="t" style="left:1340.9px;top:501.3px;font-size:28px;color:#1a1a1a;font-weight:400;transform:scaleX(1.0309);">Downloads</div>
<svg class="a" style="left:1501px;top:507px;" width="12" height="18" viewBox="0 0 12 18"><path d="M2 2 L9 9 L2 16" fill="none" stroke="#7a7a7a" stroke-width="2.6"/></svg>
<svg class="a" style="left:1976px;top:509px;" width="22" height="15" viewBox="0 0 22 15"><path d="M2 2 L11 11 L20 2" fill="none" stroke="#6a6a6a" stroke-width="2.6"/></svg>
<svg class="a" style="left:2050px;top:500px;" width="30" height="31" viewBox="0 0 30 31"><path d="M22 6 A12 12 0 1 1 8 5" fill="none" stroke="#777" stroke-width="2.8"/><path d="M3 1 L11 1 L10 10" fill="none" stroke="#777" stroke-width="2.6"/></svg>
<div class="a" style="left:2127px;top:480px;width:470px;height:70px;border:2px solid #d9d9d9;box-sizing:border-box;background:#fff;"></div>
<svg class="a" style="left:2159px;top:500px;" width="31" height="31" viewBox="0 0 31 31"><circle cx="19" cy="11" r="9" fill="none" stroke="#555" stroke-width="2"/><path d="M12.5 17.5 L2 29" stroke="#555" stroke-width="2.2"/></svg>
<div class="t" style="left:2221.0px;top:501.3px;font-size:28px;color:#6d6d6d;font-weight:400;transform:scaleX(0.9880);">Search Downloads</div>
<div class="a" style="left:865px;top:564px;width:1755px;height:72px;background:#f3f5f8;"></div>
<div class="t" style="left:906.0px;top:587.3px;font-size:28px;color:#1e395b;font-weight:400;">Organize</div>
<svg class="a" style="left:1029px;top:596px;" width="14" height="8" viewBox="0 0 14 8"><path d="M0 0 H14 L7 8 Z" fill="#1e395b"/></svg>
<div class="t" style="left:1109.9px;top:587.3px;font-size:28px;color:#1e395b;font-weight:400;transform:scaleX(1.0470);">New folder</div>
<svg class="a" style="left:2337px;top:587px;" width="34" height="26" viewBox="0 0 34 26"><rect x="1" y="1" width="32" height="24" fill="#fff" stroke="#777" stroke-width="2"/><rect x="4" y="4" width="26" height="18" fill="#6ab0e8"/><rect x="4" y="16" width="26" height="6" fill="#3a9a3a"/><circle cx="21" cy="12" r="5" fill="#e8c020"/><rect x="5" y="14" width="5" height="8" fill="#d03030"/></svg>
<svg class="a" style="left:2396px;top:596px;" width="14" height="8" viewBox="0 0 14 8"><path d="M0 0 H14 L7 8 Z" fill="#1e395b"/></svg>
<svg class="a" style="left:2465px;top:587px;" width="32" height="26" viewBox="0 0 32 26"><rect x="1" y="1" width="30" height="24" fill="#fff" stroke="#777" stroke-width="2"/><rect x="19" y="2" width="11" height="22" fill="#1e90e0"/><path d="M8 2 V24" stroke="#999" stroke-width="2"/></svg>
<svg class="a" style="left:2548px;top:581px;" width="38" height="38" viewBox="0 0 38 38"><circle cx="19" cy="19" r="18.5" fill="#0a64c2"/><text x="19" y="29" font-family="Liberation Sans" font-size="28" fill="#fff" text-anchor="middle">?</text></svg>
<div class="a" style="left:865px;top:749px;width:324px;height:56px;background:#d9d9d9;"></div>
<div class="a" style="left:1191px;top:636px;width:37px;height:677px;background:#f0f0f0;"></div>
<div class="a" style="left:1191px;top:1002px;width:36px;height:272px;background:#c3c3c3;"></div>
<svg class="a" style="left:1199px;top:649px;" width="19" height="15" viewBox="0 0 19 15"><path d="M2 13 L9.5 4 L17 13" fill="none" stroke="#606060" stroke-width="3"/></svg>
<svg class="a" style="left:1199px;top:1286px;" width="19" height="14" viewBox="0 0 19 14"><path d="M2 2 L9.5 11 L17 2" fill="none" stroke="#606060" stroke-width="3"/></svg>
<div class="a" style="left:1232px;top:636px;width:2px;height:677px;background:#ededed;"></div>
<div class="t" style="left:985.7px;top:653.1px;font-size:27px;color:#000;font-weight:400;transform:scaleX(1.1271);">Desktop</div>
<div class="t" style="left:985.9px;top:709.1px;font-size:27px;color:#000;font-weight:400;transform:scaleX(1.0463);">Documents</div>
<div class="t" style="left:985.9px;top:764.1px;font-size:27px;color:#000;font-weight:400;transform:scaleX(1.0702);">Downloads</div>
<div class="t" style="left:985.9px;top:820.1px;font-size:27px;color:#000;font-weight:400;transform:scaleX(1.0471);">Music</div>
<div class="t" style="left:986.0px;top:876.1px;font-size:27px;color:#000;font-weight:400;transform:scaleX(1.0021);">Pictures</div>
<div class="t" style="left:988.0px;top:932.1px;font-size:27px;color:#000;font-weight:400;transform:scaleX(1.0519);">Videos</div>
<div class="t" style="left:988.0px;top:988.1px;font-size:27px;color:#000;font-weight:400;">Windows (C:)</div>
<div class="t" style="left:986.0px;top:1044.1px;font-size:27px;color:#000;font-weight:400;transform:scaleX(1.0069);">Local Disk (D:)</div>
<div class="t" style="left:986.0px;top:1099.1px;font-size:27px;color:#000;font-weight:400;transform:scaleX(0.9895);">Local Disk (E:)</div>
<div class="a" style="left:987px;top:1140px;width:202px;height:56px;overflow:hidden;">
<div class="t" style="left:0.0px;top:15.1px;font-size:27px;color:#000;font-weight:400;">WorkDrive TrueSync</div>
</div>
<div class="t" style="left:966.9px;top:1229.1px;font-size:27px;color:#000;font-weight:400;transform:scaleX(1.0742);">Network</div>
<svg class="a" style="left:941px;top:654px;" width="35" height="25" viewBox="0 0 35 25"><rect x="0" y="0" width="35" height="25" fill="#0f8ee6"/><rect x="2" y="20" width="31" height="2" fill="#e8f4fc"/></svg>
<svg class="a" style="left:945px;top:703px;" width="27" height="35" viewBox="0 0 27 35"><path d="M1 1 H20 L26 7 V34 H1 Z" fill="#fafafa" stroke="#8a8a8a" stroke-width="2"/><rect x="5" y="7" width="14" height="3" fill="#2a8ae0"/><rect x="5" y="13" width="17" height="2" fill="#3e9be8"/><rect x="5" y="19" width="10" height="2" fill="#aaa"/><rect x="16" y="18" width="7" height="5" fill="#2b7a4e"/><rect x="5" y="25" width="17" height="2" fill="#aaa"/></svg>
<svg class="a" style="left:942px;top:762px;" width="32" height="32" viewBox="0 0 32 32"><path d="M10 0 H22 V16 H31 L16 31 L1 16 H10 Z" fill="#1d8de3"/></svg>
<svg class="a" style="left:947px;top:816px;" width="23" height="32" viewBox="0 0 23 32"><path d="M11 2 L11 26" stroke="#1d8de3" stroke-width="3.5"/><ellipse cx="7" cy="26" rx="6.5" ry="5" fill="#1d8de3"/><path d="M11 2 Q20 8 17 18" fill="none" stroke="#1d8de3" stroke-width="3.5"/></svg>
<svg class="a" style="left:941px;top:876px;" width="35" height="26" viewBox="0 0 35 26"><rect x="1" y="1" width="33" height="24" fill="#f5f5f5" stroke="#9a9a9a" stroke-width="2"/><rect x="4" y="4" width="27" height="18" fill="#7fb6dd"/><path d="M4 14 Q14 10 20 15 T31 16 V22 H4 Z" fill="#2d6b4a"/></svg>
<svg class="a" style="left:941px;top:926px;" width="35" height="34" viewBox="0 0 35 34"><rect x="0" y="0" width="35" height="34" fill="#444"/><rect x="8" y="2" width="19" height="30" fill="#3a78c8"/><rect x="10" y="4" width="15" height="12" fill="#c8a030"/><rect x="10" y="18" width="15" height="12" fill="#4a90d8"/><rect x="2" y="2" width="4" height="3" fill="#ddd"/><rect x="29" y="2" width="4" height="3" fill="#ddd"/><rect x="2" y="8" width="4" height="3" fill="#ddd"/><rect x="29" y="8" width="4" height="3" fill="#ddd"/><rect x="2" y="14" width="4" height="3" fill="#ddd"/><rect x="29" y="14" width="4" height="3" fill="#ddd"/><rect x="2" y="20" width="4" height="3" fill="#ddd"/><rect x="29" y="20" width="4" height="3" fill="#ddd"/><rect x="2" y="26" width="4" height="3" fill="#ddd"/><rect x="29" y="26" width="4" height="3" fill="#ddd"/></svg>
<svg class="a" style="left:941px;top:980px;" width="36" height="35" viewBox="0 -4 36 35"><rect x="0" y="4" width="8" height="7" fill="#14a0ea"/><rect x="10" y="4" width="8" height="7" fill="#14a0ea"/><rect x="0" y="13" width="8" height="7" fill="#14a0ea"/><rect x="10" y="13" width="8" height="7" fill="#14a0ea"/><rect x="24" y="3" width="10" height="14" rx="3" fill="none" stroke="#a9b3bd" stroke-width="2"/><rect x="22" y="10" width="14" height="10" fill="#b9c3cd"/><path d="M2 22 L10 14 H34 L34 24 Q34 28 30 28 H6 Q2 28 2 24 Z" fill="#d6d6d6"/><rect x="2" y="22" width="32" height="6" fill="#3a3a3a"/><rect x="6" y="24" width="2" height="2" fill="#3c3"/></svg>
<svg class="a" style="left:941px;top:1036px;" width="36" height="35" viewBox="0 0 36 35"><path d="M2 22 L10 14 H34 L34 24 Q34 28 30 28 H6 Q2 28 2 24 Z" fill="#d6d6d6"/><rect x="2" y="22" width="32" height="6" fill="#3a3a3a"/><rect x="6" y="24" width="2" height="2" fill="#3c3"/><rect x="22" y="1" width="10" height="14" rx="4" fill="none" stroke="#e8b830" stroke-width="2.5"/><rect x="20" y="10" width="14" height="14" fill="#f0b820"/></svg>
<svg class="a" style="left:941px;top:1092px;" width="36" height="35" viewBox="0 0 36 35"><path d="M2 22 L10 14 H34 L34 24 Q34 28 30 28 H6 Q2 28 2 24 Z" fill="#d6d6d6"/><rect x="2" y="22" width="32" height="6" fill="#3a3a3a"/><rect x="6" y="24" width="2" height="2" fill="#3c3"/><rect x="22" y="1" width="10" height="14" rx="4" fill="none" stroke="#e8b830" stroke-width="2.5"/><rect x="20" y="10" width="14" height="14" fill="#f0b820"/></svg>
<svg class="a" style="left:941px;top:1148px;" width="36" height="35" viewBox="0 0 36 35"><path d="M2 22 L10 14 H34 L34 24 Q34 28 30 28 H6 Q2 28 2 24 Z" fill="#d6d6d6"/><rect x="2" y="22" width="32" height="6" fill="#3a3a3a"/><rect x="6" y="24" width="2" height="2" fill="#3c3"/></svg>
<svg class="a" style="left:923px;top:1225px;" width="35" height="35" viewBox="0 0 35 35"><circle cx="21" cy="14" r="13" fill="#2a8fd0"/><path d="M10 8 Q21 12 32 9 M14 22 Q21 16 30 22" stroke="#9fd3f5" stroke-width="1.5" fill="none"/><path d="M0 16 L18 18 L18 30 L2 28 Z" fill="#16a6ec"/><rect x="7" y="30" width="10" height="3" fill="#777"/></svg>
<div class="a" style="left:1235px;top:636px;width:1348px;height:677px;overflow:hidden;">
<div class="a" style="left:59px;top:-66px;width:454px;height:304px;background:#fff;box-shadow:2px 3px 4px rgba(0,0,0,0.35);"></div>
<svg class="a" style="left:59px;top:-66px;" width="454" height="304" viewBox="1294 570 454 304"><rect x="1325" y="620" width="82" height="38" fill="#efefef"/><rect x="1582" y="620" width="53" height="51" fill="#efefef"/><path d="M1651 669 H1694 L1704 679 V729 H1651 Z" fill="#eeeeee" stroke="#e6e6e6" stroke-width="1.5"/><rect x="1659" y="683" width="35" height="2" fill="#dedede"/><rect x="1659" y="691" width="35" height="2" fill="#dedede"/><rect x="1659" y="699" width="35" height="2" fill="#dedede"/><rect x="1659" y="707" width="35" height="2" fill="#dedede"/><rect x="1659" y="715" width="35" height="2" fill="#dedede"/><path d="M1629 847 L1660 794 H1731 L1700 847 Z" fill="#ececec"/><rect x="1393" y="797" width="24" height="50" fill="#e4e4e4"/><path d="M1412 610 H1448 L1458 620 V678 H1412 Z" fill="#f0f0f0" stroke="#e2e2e2" stroke-width="1.5"/><rect x="1420" y="624" width="28" height="2" fill="#dedede"/><rect x="1420" y="632" width="28" height="2" fill="#dedede"/><rect x="1420" y="640" width="28" height="2" fill="#dedede"/><rect x="1420" y="648" width="28" height="2" fill="#dedede"/><rect x="1420" y="656" width="28" height="2" fill="#dedede"/><rect x="1420" y="664" width="28" height="2" fill="#dedede"/><rect x="1405" y="653" width="32" height="14" rx="2" fill="#f45b45"/><rect x="1411" y="659.0" width="20" height="2" fill="#ffd9d2"/><path d="M1363 676 H1401 L1411 686 V737 H1363 Z" fill="#f0f0f0" stroke="#e2e2e2" stroke-width="1.5"/><rect x="1371" y="690" width="30" height="2" fill="#dedede"/><rect x="1371" y="698" width="30" height="2" fill="#dedede"/><rect x="1371" y="706" width="30" height="2" fill="#dedede"/><rect x="1371" y="714" width="30" height="2" fill="#dedede"/><rect x="1371" y="722" width="30" height="2" fill="#dedede"/><rect x="1355" y="713" width="32" height="15" rx="2" fill="#f45b45"/><rect x="1361" y="719.5" width="20" height="2" fill="#ffd9d2"/><path d="M1340 763 H1376 L1386 773 V824 H1340 Z" fill="#f0f0f0" stroke="#e2e2e2" stroke-width="1.5"/><rect x="1348" y="777" width="28" height="2" fill="#dedede"/><rect x="1348" y="785" width="28" height="2" fill="#dedede"/><rect x="1348" y="793" width="28" height="2" fill="#dedede"/><rect x="1348" y="801" width="28" height="2" fill="#dedede"/><rect x="1348" y="809" width="28" height="2" fill="#dedede"/><rect x="1333" y="799" width="31" height="14" rx="2" fill="#f45b45"/><rect x="1339" y="805.0" width="19" height="2" fill="#ffd9d2"/><path d="M1640 769 H1677 L1687 779 V832 H1640 Z" fill="#f0f0f0" stroke="#e2e2e2" stroke-width="1.5"/><rect x="1648" y="783" width="29" height="2" fill="#dedede"/><rect x="1648" y="791" width="29" height="2" fill="#dedede"/><rect x="1648" y="799" width="29" height="2" fill="#dedede"/><rect x="1648" y="807" width="29" height="2" fill="#dedede"/><rect x="1648" y="815" width="29" height="2" fill="#dedede"/><rect x="1632" y="807" width="31" height="15" rx="2" fill="#f45b45"/><rect x="1638" y="813.5" width="19" height="2" fill="#ffd9d2"/><path d="M1409 847 Q1405 770 1440 730 Q1460 712 1490 710 H1530 Q1565 714 1578 740 L1592 847 Z" fill="#2d5563"/><path d="M1570 836 Q1600 834 1612 800 L1633 756 L1610 750 L1588 790 Q1580 805 1565 810 Z" fill="#2d5563"/><g transform="rotate(-18 1605 720)"><rect x="1577" y="686" width="62" height="70" fill="#ececec" stroke="#d8d8d8" stroke-width="1.5"/><rect x="1570" y="722" width="40" height="18" rx="2" fill="#f45b45"/><rect x="1576" y="730.0" width="28" height="2" fill="#ffd9d2"/></g><path d="M1622 740 Q1640 745 1636 762 L1618 766 Z" fill="#f7a988"/><rect x="1497" y="690" width="34" height="28" fill="#f7b59b"/><path d="M1483 630 H1547 V690 Q1547 712 1520 712 Q1483 712 1483 690 Z" fill="#f9b89a"/><path d="M1472 630 H1570 Q1572 650 1556 662 Q1540 652 1520 656 Q1500 650 1488 668 Q1476 656 1472 640 Z" fill="#1f3a44"/><path d="M1540 668 Q1538 690 1528 696" fill="none" stroke="#d98a70" stroke-width="1.5"/><circle cx="1503" cy="660" r="2" fill="#333"/><circle cx="1535" cy="660" r="2" fill="#333"/><path d="M1445 775 L1460 763 H1500 L1510 770 H1560 L1570 847 H1462 Z" fill="#de4535"/><path d="M1455 780 H1585 L1600 782 L1578 847 H1470 Z" fill="#e6e6e6"/><path d="M1498 780 H1600 L1580 847 H1478 Z" fill="#fa5a44"/><path d="M1458 820 Q1475 805 1500 812 L1518 830 L1512 847 H1462 Z" fill="#f9b89a"/><rect x="1322" y="846" width="397" height="2" fill="#efefef"/></svg>
<div class="a" style="left:713px;top:-66px;width:454px;height:304px;background:#fff;box-shadow:2px 3px 4px rgba(0,0,0,0.35);"></div>
<svg class="a" style="left:713px;top:-66px;" width="454" height="304" viewBox="1948 570 454 304"><ellipse cx="2170" cy="793" rx="176" ry="11" fill="#f2f2f2"/><rect x="2056" y="600" width="215" height="104" fill="#e6f0fd"/><path d="M2057 600 V703 H2271" fill="none" stroke="#76aef0" stroke-width="2.5"/><path d="M2081 641 H2095 L2099 646 H2121 V652 H2079 Z" fill="#9cc2f8"/><path d="M2077 652 H2126 L2121 674 H2082 Z" fill="#8ab8f8"/><rect x="2082" y="682" width="40" height="5" fill="#b8b8b8"/><path d="M2149 641 H2163 L2167 646 H2189 V652 H2147 Z" fill="#9cc2f8"/><path d="M2145 652 H2194 L2189 674 H2150 Z" fill="#8ab8f8"/><rect x="2150" y="682" width="40" height="5" fill="#b8b8b8"/><path d="M2216 641 H2230 L2234 646 H2256 V652 H2214 Z" fill="#9cc2f8"/><path d="M2212 652 H2261 L2256 674 H2217 Z" fill="#8ab8f8"/><rect x="2217" y="682" width="40" height="5" fill="#b8b8b8"/><path d="M2186 720 L2200 709 L2220 712 L2249 722 L2240 766 L2186 758 Z" fill="#ececec"/><path d="M2046 762 Q2034.0 716.0 2010 670" fill="none" stroke="#1a73e8" stroke-width="6" stroke-linecap="round"/><path d="M2046 762 Q2040.0 711.0 2022 660" fill="none" stroke="#1a73e8" stroke-width="6" stroke-linecap="round"/><path d="M2046 762 Q2046.5 721.0 2035 680" fill="none" stroke="#1a73e8" stroke-width="6" stroke-linecap="round"/><path d="M2046 762 Q2054.0 715.0 2050 668" fill="none" stroke="#1a73e8" stroke-width="6" stroke-linecap="round"/><path d="M2046 762 Q2066.0 726.0 2074 690" fill="none" stroke="#1a73e8" stroke-width="6" stroke-linecap="round"/><path d="M2046 762 Q2063.0 737.0 2068 712" fill="none" stroke="#1a73e8" stroke-width="6" stroke-linecap="round"/><path d="M2046 762 Q2032.0 731.0 2006 700" fill="none" stroke="#1a73e8" stroke-width="6" stroke-linecap="round"/><path d="M2046 762 Q2039.0 741.0 2020 720" fill="none" stroke="#1a73e8" stroke-width="6" stroke-linecap="round"/><path d="M2046 762 Q2059.0 748.5 2060 735" fill="none" stroke="#1a73e8" stroke-width="6" stroke-linecap="round"/><path d="M2029 760 H2063 L2059 793 H2033 Z" fill="#0a5ccc"/><rect x="2027" y="758" width="38" height="6" fill="#0b62d6"/><path d="M2270 636 H2308 L2318 680 L2332 780 L2322 784 L2300 700 L2292 680 L2284 785 L2272 785 Z" fill="#1e2d33"/><rect x="2270" y="630" width="34" height="14" fill="#1a7ae8"/><path d="M2262 793 L2284 783 L2286 793 Z M2316 790 L2332 780 L2334 790 Z" fill="#1e2d33"/></svg>
<div class="t" style="left:237.4px;top:258.1px;font-size:27px;color:#000;font-weight:400;transform:scaleX(1.0214);">4751965</div>
<div class="t" style="left:892.9px;top:259.1px;font-size:27px;color:#000;font-weight:400;transform:scaleX(1.0117);">5130169</div>
<div class="a" style="left:59px;top:312px;width:454px;height:304px;background:#fff;box-shadow:2px 3px 4px rgba(0,0,0,0.35);"></div>
<svg class="a" style="left:59px;top:312px;" width="454" height="304" viewBox="1294 948 454 304"><path d="M1350 1218 L1345 1180 H1372 L1368 1218 Z" fill="#e8e8e8"/><path d="M1358 1180 Q1330 1140 1322 1090" fill="none" stroke="#ededed" stroke-width="4"/><path d="M1358 1180 Q1338 1132 1332 1094" fill="none" stroke="#ededed" stroke-width="4"/><path d="M1358 1180 Q1346 1124 1342 1098" fill="none" stroke="#ededed" stroke-width="4"/><path d="M1358 1180 Q1354 1116 1352 1102" fill="none" stroke="#ededed" stroke-width="4"/><path d="M1358 1180 Q1362 1108 1362 1106" fill="none" stroke="#ededed" stroke-width="4"/><path d="M1358 1180 Q1370 1100 1372 1110" fill="none" stroke="#ededed" stroke-width="4"/><rect x="1637" y="1167" width="76" height="51" fill="#e6e6e6"/><rect x="1380" y="983" width="282" height="205" rx="8" fill="#2f5d6b"/><rect x="1386" y="989" width="270" height="163" fill="#ffffff"/><path d="M1482 1188 H1566 Q1568 1212 1590 1218 H1458 Q1480 1212 1482 1188 Z" fill="#2f5d6b"/><rect x="1367" y="1026" width="58" height="93" rx="3" fill="#f7f7f7" stroke="#e4e4e4" stroke-width="1.5"/><rect x="1375" y="1045" width="40" height="2" fill="#e0e0e0"/><rect x="1375" y="1052" width="40" height="2" fill="#e0e0e0"/><rect x="1375" y="1059" width="40" height="2" fill="#e0e0e0"/><rect x="1375" y="1066" width="40" height="2" fill="#e0e0e0"/><rect x="1375" y="1073" width="40" height="2" fill="#e0e0e0"/><rect x="1375" y="1080" width="40" height="2" fill="#e0e0e0"/><rect x="1375" y="1087" width="40" height="2" fill="#e0e0e0"/><rect x="1375" y="1094" width="40" height="2" fill="#e0e0e0"/><rect x="1375" y="1101" width="40" height="2" fill="#e0e0e0"/><rect x="1425" y="993" width="78" height="142" rx="3" fill="#fafafa" stroke="#e4e4e4" stroke-width="1.5"/><rect x="1425" y="993" width="78" height="10" fill="#e6e6e6"/><rect x="1435" y="1015" width="58" height="2" fill="#e2e2e2"/><rect x="1435" y="1022" width="58" height="2" fill="#e2e2e2"/><rect x="1435" y="1029" width="58" height="2" fill="#e2e2e2"/><rect x="1435" y="1036" width="58" height="2" fill="#e2e2e2"/><rect x="1435" y="1043" width="58" height="2" fill="#e2e2e2"/><rect x="1435" y="1050" width="58" height="2" fill="#e2e2e2"/><rect x="1441" y="1064" width="2" height="30" fill="#f26a55"/><rect x="1446" y="1077" width="2" height="17" fill="#f26a55"/><rect x="1451" y="1070" width="2" height="24" fill="#f26a55"/><rect x="1456" y="1083" width="2" height="11" fill="#f26a55"/><rect x="1461" y="1076" width="2" height="18" fill="#f26a55"/><rect x="1466" y="1069" width="2" height="25" fill="#f26a55"/><rect x="1471" y="1082" width="2" height="12" fill="#f26a55"/><rect x="1476" y="1075" width="2" height="19" fill="#f26a55"/><rect x="1481" y="1068" width="2" height="26" fill="#f26a55"/><rect x="1486" y="1081" width="2" height="13" fill="#f26a55"/><rect x="1491" y="1074" width="2" height="20" fill="#f26a55"/><rect x="1630" y="1026" width="60" height="91" rx="4" fill="#f4f4f4" stroke="#e4e4e4" stroke-width="1.5"/><rect x="1630" y="1039" width="53" height="70" fill="#2f5d6b"/><path d="M1630 1109 L1650 1075 L1665 1095 L1683 1080 V1109 Z" fill="#1f3f4a"/><circle cx="1653" cy="1058" r="4" fill="#1f3f4a"/><rect x="1498" y="977" width="134" height="186" rx="5" fill="#ffffff" stroke="#e2e2e2" stroke-width="1.5"/><rect x="1499" y="978" width="132" height="17" rx="4" fill="#e4e4e4"/><circle cx="1506" cy="986" r="1.8" fill="#fff"/><circle cx="1513" cy="986" r="1.8" fill="#fff"/><circle cx="1520" cy="986" r="1.8" fill="#fff"/><text x="1513" y="1040" font-family="Liberation Serif" font-size="30" fill="#222">T</text><rect x="1540" y="1005" width="70" height="2.5" fill="#dddddd"/><rect x="1540" y="1012" width="70" height="2.5" fill="#dddddd"/><rect x="1540" y="1019" width="70" height="2.5" fill="#dddddd"/><rect x="1540" y="1026" width="70" height="2.5" fill="#dddddd"/><rect x="1515" y="1033" width="45" height="2.5" fill="#dddddd"/><rect x="1515" y="1040" width="45" height="2.5" fill="#dddddd"/><rect x="1515" y="1047" width="45" height="2.5" fill="#dddddd"/><rect x="1515" y="1054" width="45" height="2.5" fill="#dddddd"/><rect x="1515" y="1061" width="45" height="2.5" fill="#dddddd"/><rect x="1515" y="1068" width="45" height="2.5" fill="#dddddd"/><rect x="1515" y="1075" width="45" height="2.5" fill="#dddddd"/><rect x="1515" y="1082" width="45" height="2.5" fill="#dddddd"/><rect x="1515" y="1089" width="45" height="2.5" fill="#dddddd"/><rect x="1515" y="1096" width="45" height="2.5" fill="#dddddd"/><rect x="1515" y="1103" width="45" height="2.5" fill="#dddddd"/><rect x="1515" y="1110" width="45" height="2.5" fill="#dddddd"/><rect x="1515" y="1117" width="45" height="2.5" fill="#dddddd"/><rect x="1515" y="1124" width="45" height="2.5" fill="#dddddd"/><rect x="1515" y="1131" width="45" height="2.5" fill="#dddddd"/><rect x="1515" y="1138" width="45" height="2.5" fill="#dddddd"/><rect x="1568" y="1110" width="50" height="2.5" fill="#dddddd"/><rect x="1568" y="1117" width="50" height="2.5" fill="#dddddd"/><rect x="1568" y="1124" width="50" height="2.5" fill="#dddddd"/><rect x="1568" y="1131" width="50" height="2.5" fill="#dddddd"/><rect x="1568" y="1138" width="50" height="2.5" fill="#dddddd"/><rect x="1568" y="1145" width="50" height="2.5" fill="#dddddd"/><rect x="1568" y="1152" width="50" height="2.5" fill="#dddddd"/><rect x="1568" y="1059" width="44" height="45" fill="#f45b45"/><path d="M1571 1101 L1585 1078 L1598 1093 L1609 1084 V1101 Z" fill="#d8402f"/><circle cx="1595" cy="1073" r="2.5" fill="#d8402f"/><circle cx="1521" cy="1171" r="5" fill="#1f3f4a"/><path d="M1330 986 L1356 979 L1368 992 L1377 1034 L1342 1043 Z" fill="#f45b45"/><path d="M1661 965 L1690 957 L1702 968 L1710 1002 L1675 1012 Z" fill="#f45b45"/><path d="M1690 1146 L1696 1168 L1700 1160 L1710 1173 L1713 1170 L1704 1157 L1712 1155 Z" fill="#1f2e33"/><path d="M1392 1150 Q1395 1135 1412 1135 H1440 Q1456 1137 1458 1152 L1460 1196 H1390 Z" fill="#f86a4e"/><circle cx="1420" cy="1105" r="22" fill="#1f2426"/><path d="M1406 1100 Q1408 1130 1424 1130 Q1438 1128 1438 1105 Z" fill="#8a4f3c"/><rect x="1415" y="1125" width="14" height="12" fill="#8a4f3c"/><path d="M1382 1200 Q1385 1185 1420 1190 Q1470 1180 1478 1200 Q1475 1215 1440 1222 L1425 1230 L1410 1222 Q1385 1218 1382 1200 Z" fill="#1f2a2e"/><rect x="1404" y="1167" width="47" height="32" rx="2" fill="#e2e2e2"/><path d="M1405 1222 L1412 1246 L1418 1225 Z M1440 1222 L1446 1244 L1452 1220 Z" fill="#f86a4e"/><rect x="1324" y="1217" width="392" height="2" fill="#efefef"/></svg>
<div class="t" style="left:239.4px;top:637.1px;font-size:27px;color:#000;font-weight:400;">5180211</div>
<div class="a" style="left:690px;top:299px;width:508px;height:376px;background:#cce8ff;border:2px solid #99d1ff;box-sizing:border-box;"></div>
<svg class="a" style="left:705px;top:354px;" width="475" height="280" viewBox="1940 990 475 280"><rect x="1944" y="997" width="462" height="255" fill="#6f7880"/><rect x="1994" y="997" width="362" height="255" fill="#2b2b2b"/><rect x="1955" y="1010" width="30" height="26" fill="#cce8ff"/><rect x="2367" y="1010" width="30" height="26" fill="#cce8ff"/><rect x="1955" y="1060" width="30" height="26" fill="#cce8ff"/><rect x="2367" y="1060" width="30" height="26" fill="#cce8ff"/><rect x="1955" y="1110" width="30" height="26" fill="#cce8ff"/><rect x="2367" y="1110" width="30" height="26" fill="#cce8ff"/><rect x="1955" y="1161" width="30" height="26" fill="#cce8ff"/><rect x="2367" y="1161" width="30" height="26" fill="#cce8ff"/><rect x="1955" y="1211" width="30" height="26" fill="#cce8ff"/><rect x="2367" y="1211" width="30" height="26" fill="#cce8ff"/><rect x="2000" y="1010" width="350" height="229" fill="#fbfbfb"/><rect x="2000" y="1010" width="350" height="12" fill="#f1f1f1"/><rect x="2010" y="1015" width="30" height="3" fill="#cfcfcf"/><rect x="2052" y="1015" width="30" height="3" fill="#cfcfcf"/><rect x="2094" y="1015" width="30" height="3" fill="#cfcfcf"/><rect x="2136" y="1015" width="30" height="3" fill="#cfcfcf"/><rect x="2178" y="1015" width="30" height="3" fill="#cfcfcf"/><rect x="2220" y="1015" width="30" height="3" fill="#cfcfcf"/><rect x="2262" y="1015" width="30" height="3" fill="#cfcfcf"/><rect x="2304" y="1015" width="30" height="3" fill="#cfcfcf"/><rect x="2125" y="1030" width="6" height="8" fill="#bdbdbd"/><rect x="2142" y="1030" width="6" height="8" fill="#bdbdbd"/><rect x="2159" y="1030" width="6" height="8" fill="#bdbdbd"/><rect x="2176" y="1030" width="6" height="8" fill="#bdbdbd"/><rect x="2193" y="1030" width="6" height="8" fill="#bdbdbd"/><rect x="2210" y="1030" width="6" height="8" fill="#bdbdbd"/><rect x="2000" y="1047" width="350" height="2" fill="#eeeeee"/><text x="2006" y="1068" font-family="Liberation Sans" font-size="10.5" font-weight="700" fill="#333" textLength="303" lengthAdjust="spacingAndGlyphs">Edit any file from within WorkDrive with the new Genie App</text><rect x="2011" y="1075" width="294" height="152" fill="#1c1c1c"/><rect x="2050" y="1094" width="202" height="101" fill="#f6f9fa"/><rect x="2050" y="1110" width="63" height="18" fill="#f45b45"/><rect x="2113" y="1094" width="76" height="16" fill="#f45b45"/><path d="M2115 1110 H2190 L2185 1195 H2128 Z" fill="#3f7392"/><path d="M2120 1140 L2140 1120 L2160 1140 L2175 1125 L2188 1150 L2185 1195 H2128 Z" fill="#2a5a78"/><path d="M2130 1170 H2185 V1195 H2128 Z" fill="#4a6a70"/><rect x="2055" y="1134" width="50" height="2" fill="#e0d6d6"/><rect x="2055" y="1142" width="50" height="2" fill="#e0d6d6"/><rect x="2055" y="1150" width="50" height="2" fill="#e0d6d6"/><path d="M2200 1112 L2220 1118 L2245 1126" fill="none" stroke="#f0a060" stroke-width="1.5"/><path d="M2200 1132 L2220 1130 L2245 1124" fill="none" stroke="#4080c0" stroke-width="1.5"/><rect x="2165" y="1088" width="0" height="0" fill="none"/><rect x="2030" y="1216" width="110" height="3" fill="#eeeeee"/><rect x="2145" y="1216" width="75" height="3" fill="#eeeeee"/><rect x="2018" y="1083" width="40" height="4" fill="#666"/><rect x="2225" y="1083" width="20" height="5" fill="#0aa080"/><rect x="2250" y="1083" width="25" height="5" fill="#777"/><rect x="2311" y="1050" width="39" height="189" fill="#fafafa"/><rect x="2263" y="1213" width="58" height="16" fill="#f0474a"/><path d="M2367 1175 H2379 L2398 1245 H2348 Z" fill="#f5850f"/><path d="M2362 1197 H2384 L2389 1215 H2357 Z" fill="#d2d2d2"/><path d="M2354 1228 H2392 L2396 1243 H2350 Z" fill="#d2d2d2"/><path d="M2331 1252 L2348 1238 H2398 L2410 1252 Z" fill="#f07a10"/><rect x="2331" y="1252" width="79" height="12" fill="#e86a0a"/></svg>
<div class="t" style="left:889.7px;top:637.1px;font-size:27px;color:#000;font-weight:400;transform:scaleX(1.1062);">Portfolio</div>
</div>
<div class="a" style="left:2583px;top:636px;width:36px;height:677px;background:#f0f0f0;"></div>
<div class="a" style="left:2583px;top:782px;width:36px;height:40px;background:#c3c3c3;"></div>
<svg class="a" style="left:2590px;top:649px;" width="21" height="15" viewBox="0 0 21 15"><path d="M2 13 L10.5 4 L19 13" fill="none" stroke="#606060" stroke-width="3"/></svg>
<svg class="a" style="left:2590px;top:1286px;" width="21" height="14" viewBox="0 0 21 14"><path d="M2 2 L10.5 11 L19 2" fill="none" stroke="#606060" stroke-width="3"/></svg>
<div class="a" style="left:865px;top:1313px;width:1755px;height:187px;background:#f0f0f0;"></div>
<div class="t" style="left:1140.0px;top:1357.3px;font-size:28px;color:#000;font-weight:400;transform:scaleX(0.9937);">File name:</div>
<div class="a" style="left:1278px;top:1344px;width:838px;height:52px;background:#fff;border:2px solid #7a7a7a;box-sizing:border-box;"></div>
<div class="t" style="left:1282.9px;top:1357.3px;font-size:28px;color:#000;font-weight:400;transform:scaleX(1.0520);">Portfolio</div>
<svg class="a" style="left:2089px;top:1365px;" width="18" height="11" viewBox="0 0 18 11"><path d="M1 1 L9 9 L17 1" fill="none" stroke="#444" stroke-width="1.6"/></svg>
<div class="a" style="left:2145px;top:1344px;width:437px;height:50px;background:#e1e1e1;border:2px solid #adadad;box-sizing:border-box;"></div>
<div class="t" style="left:2154.0px;top:1357.3px;font-size:28px;color:#000;font-weight:400;transform:scaleX(0.9814);">All Files</div>
<svg class="a" style="left:2555px;top:1365px;" width="18" height="11" viewBox="0 0 18 11"><path d="M1 1 L9 9 L17 1" fill="none" stroke="#444" stroke-width="1.6"/></svg>
<div class="a" style="left:2147px;top:1412px;width:201px;height:57px;background:#e5f1fb;border:2px solid #0078d7;box-sizing:border-box;"></div>
<div class="t" style="left:2195.0px;top:1426.3px;font-size:28px;color:#000;font-weight:400;transform:scaleX(1.0333);">Open</div>
<div class="a" style="left:2314px;top:1418px;width:3px;height:46px;background:#6a6a6a;"></div>
<svg class="a" style="left:2320px;top:1436px;" width="22" height="13" viewBox="0 0 22 13"><path d="M0 0 H22 L11 12 Z" fill="#000"/></svg>
<div class="a" style="left:2380px;top:1412px;width:200px;height:57px;background:#e1e1e1;border:2px solid #adadad;box-sizing:border-box;"></div>
<div class="t" style="left:2439.0px;top:1426.3px;font-size:28px;color:#000;font-weight:400;transform:scaleX(0.9671);">Cancel</div>
<svg class="a" style="left:2288px;top:1450px;" width="26" height="40" viewBox="0 0 26 40"><path d="M1 1 L1 30 L8 23 L14 36 L19 34 L13 21 L23 21 Z" fill="#fff" stroke="#000" stroke-width="2" stroke-linejoin="round"/></svg>
<svg class="a" style="left:2594px;top:1476px;" width="21" height="20" viewBox="0 0 21 20"><rect x="15" y="0" width="5" height="5" fill="#b8b8b8"/><rect x="15" y="7" width="5" height="5" fill="#b8b8b8"/><rect x="8" y="7" width="5" height="5" fill="#b8b8b8"/><rect x="15" y="14" width="5" height="5" fill="#b8b8b8"/><rect x="8" y="14" width="5" height="5" fill="#b8b8b8"/><rect x="1" y="14" width="5" height="5" fill="#b8b8b8"/></svg>
<div class="a" style="left:211px;top:2038px;width:3578px;height:94px;background:#4a4a4a;"></div>
<div class="a" style="left:211px;top:2038px;width:112px;height:94px;background:#222222;"></div>
<div class="a" style="left:323px;top:2038px;width:3466px;height:2px;background:#3c3c3c;"></div>
<svg class="a" style="left:247px;top:2066px;" width="40" height="39" viewBox="0 0 40 39"><path d="M0 5 L16 3 V18 H0 Z M18 2.6 L39 0 V18 H18 Z M0 20 H16 V35 L0 33 Z M18 20 H39 V38 L18 35.4 Z" fill="#fff"/></svg>
<div class="a" style="left:323px;top:2038px;width:801px;height:94px;background:#f0f0f0;border-top:2px solid #c2c2c2;box-sizing:border-box;"></div>
<svg class="a" style="left:350px;top:2065px;" width="40" height="41" viewBox="0 0 40 41"><circle cx="25" cy="14" r="11" fill="none" stroke="#222" stroke-width="2.4"/><path d="M17 22 L3 37" stroke="#222" stroke-width="2.6"/></svg>
<div class="t" style="left:415.9px;top:2069.1px;font-size:33px;color:#1c1c1c;font-weight:400;transform:scaleX(1.0526);">Type here to search</div>
<div class="a" style="left:1247px;top:2038px;width:104px;height:94px;background:#686868;"></div>
<div class="a" style="left:1351px;top:2038px;width:10px;height:94px;background:#545454;"></div>
<div class="a" style="left:1141px;top:2126px;width:95px;height:6px;background:#5db4ee;"></div>
<div class="a" style="left:1247px;top:2126px;width:113px;height:6px;background:#5db4ee;"></div>
<div class="a" style="left:1372px;top:2126px;width:95px;height:6px;background:#5db4ee;"></div>
<div class="a" style="left:1487px;top:2126px;width:94px;height:6px;background:#5db4ee;"></div>
<div class="a" style="left:1603px;top:2126px;width:94px;height:6px;background:#5db4ee;"></div>
<div class="a" style="left:1719px;top:2126px;width:94px;height:6px;background:#5db4ee;"></div>
<div class="a" style="left:1834px;top:2126px;width:95px;height:6px;background:#5db4ee;"></div>
<svg class="a" style="left:1160px;top:2062px;" width="54" height="44" viewBox="0 0 54 44"><path d="M2 2 H18 L22 6 H50 V40 H2 Z" fill="#f5c533"/><rect x="2" y="10" width="50" height="31" fill="#fbd757"/><path d="M16 41 V28 H38 V41" fill="none" stroke="#1e90e0" stroke-width="5"/></svg>
<svg class="a" style="left:1278px;top:2058px;" width="56" height="58" viewBox="0 0 56 58"><path d="M26 26 L4.35 13.50 A25 25 0 0 1 47.65 13.50 Z" fill="#db4437"/><path d="M26 26 L47.65 13.50 A25 25 0 0 1 26.00 51.00 Z" fill="#f4c20d"/><path d="M26 26 L26.00 51.00 A25 25 0 0 1 4.35 13.50 Z" fill="#0f9d58"/><circle cx="26" cy="26" r="11.50" fill="#fff"/><circle cx="26" cy="26" r="9.00" fill="#4285f4"/><circle cx="39" cy="40" r="16" fill="#7d8a95"/><circle cx="39" cy="36" r="8" fill="#d9b39a"/><path d="M30 24 Q39 18 48 26 L46 32 Q39 28 32 32 Z" fill="#2a2a2a"/></svg>
<svg class="a" style="left:1390px;top:2058px;" width="56" height="58" viewBox="0 0 56 58"><path d="M26 26 L4.35 13.50 A25 25 0 0 1 47.65 13.50 Z" fill="#db4437"/><path d="M26 26 L47.65 13.50 A25 25 0 0 1 26.00 51.00 Z" fill="#f4c20d"/><path d="M26 26 L26.00 51.00 A25 25 0 0 1 4.35 13.50 Z" fill="#0f9d58"/><circle cx="26" cy="26" r="11.50" fill="#fff"/><circle cx="26" cy="26" r="9.00" fill="#4285f4"/><circle cx="40" cy="40" r="16" fill="#b36fe0"/><circle cx="40" cy="36" r="6" fill="#eee"/><path d="M33 50 V42 Q40 36 47 42 V50 Z" fill="#222"/></svg>
<svg class="a" style="left:1505px;top:2058px;" width="56" height="58" viewBox="0 0 56 58"><path d="M26 26 L4.35 13.50 A25 25 0 0 1 47.65 13.50 Z" fill="#db4437"/><path d="M26 26 L47.65 13.50 A25 25 0 0 1 26.00 51.00 Z" fill="#f4c20d"/><path d="M26 26 L26.00 51.00 A25 25 0 0 1 4.35 13.50 Z" fill="#0f9d58"/><circle cx="26" cy="26" r="11.50" fill="#fff"/><circle cx="26" cy="26" r="9.00" fill="#4285f4"/><circle cx="40" cy="40" r="16" fill="#5aa02c"/><text x="40" y="48" font-family="Liberation Sans" font-size="22" font-weight="700" fill="#e8f5d8" text-anchor="middle">S</text></svg>
<svg class="a" style="left:1738px;top:2058px;" width="56" height="58" viewBox="0 0 56 58"><path d="M26 26 L4.35 13.50 A25 25 0 0 1 47.65 13.50 Z" fill="#db4437"/><path d="M26 26 L47.65 13.50 A25 25 0 0 1 26.00 51.00 Z" fill="#f4c20d"/><path d="M26 26 L26.00 51.00 A25 25 0 0 1 4.35 13.50 Z" fill="#0f9d58"/><circle cx="26" cy="26" r="11.50" fill="#fff"/><circle cx="26" cy="26" r="9.00" fill="#4285f4"/><circle cx="40" cy="40" r="17" fill="#0f3b1f"/><circle cx="40" cy="35" r="6" fill="#fff"/><path d="M30 50 Q30 42 40 42 Q50 42 50 50 Z" fill="#fff"/></svg>
<svg class="a" style="left:1620px;top:2058px;" width="55" height="54" viewBox="0 0 55 54"><path d="M12 4 L44 2 L46 50 L10 52 Z" fill="#e3b84a"/><path d="M6 8 L40 6 L44 50 L4 48 Z" fill="#a9d8ee"/><path d="M6 8 L40 6 L42 28 L4 46 Z" fill="#d6f0fa"/><path d="M12 4 L40 2" stroke="#888" stroke-width="3" stroke-dasharray="2 2"/></svg>
<svg class="a" style="left:1850px;top:2054px;" width="62" height="62" viewBox="0 0 62 62"><path d="M34 2 Q28 14 16 26 Q6 38 12 50 Q20 62 34 60 Q52 56 52 40 Q52 26 40 16 Q36 12 34 2 Z" fill="#ff4f8a"/><path d="M12 34 Q30 30 52 40 Q52 48 48 52 Q28 44 10 48 Q8 40 12 34 Z" fill="#9a58d0"/><path d="M10 46 Q28 42 48 52 Q40 60 30 60 Q14 58 10 46 Z" fill="#0aa6f0"/><path d="M34 2 Q38 12 44 20 Q36 22 28 18 Q32 10 34 2 Z" fill="#ffc010"/></svg>
<svg class="a" style="left:2958px;top:2060px;" width="52" height="51" viewBox="0 0 52 51"><circle cx="24" cy="25" r="22" fill="#f4b41a"/><circle cx="22" cy="23" r="18" fill="#fcd04a"/><path d="M18 38 Q12 38 12 32 Q12 26 19 26 Q22 18 31 20 Q38 20 40 28 Q47 28 47 34 Q47 39 41 39 Z" fill="#bfe2f7"/></svg>
<div class="t" style="left:3028.1px;top:2072.2px;font-size:34px;color:#f2f2f2;font-weight:400;transform:scaleX(0.9616);">27°C</div>
<div class="t" style="left:3118.0px;top:2072.2px;font-size:34px;color:#f2f2f2;font-weight:400;">Mostly sunny</div>
<svg class="a" style="left:3352px;top:2074px;" width="35" height="20" viewBox="0 0 35 20"><path d="M2 18 L17.5 3 L33 18" fill="none" stroke="#eee" stroke-width="2.4"/></svg>
<svg class="a" style="left:3405px;top:2068px;" width="40" height="30" viewBox="0 0 40 30"><rect x="8" y="10" width="27" height="15" fill="none" stroke="#fff" stroke-width="2.2"/><rect x="11" y="13" width="21" height="9" fill="#fff"/><rect x="35" y="14" width="3" height="7" fill="#fff"/><path d="M4 3 V9 M9 3 V9 M2 9 H11 Q11 14 6.5 14 V19 Q6.5 22 9 22" stroke="#fff" stroke-width="1.8" fill="none"/></svg>
<svg class="a" style="left:3465px;top:2066px;" width="34" height="34" viewBox="0 0 34 34"><path d="M2 32 Q2 10 28 4 M8 32 Q10 16 28 12 M14 32 Q16 22 28 20" fill="none" stroke="#ddd" stroke-width="2.2"/><circle cx="28" cy="30" r="3" fill="#fff"/></svg>
<div class="t" style="left:3527.9px;top:2050.3px;font-size:28px;color:#f2f2f2;font-weight:400;transform:scaleX(1.0193);">10:22 AM</div>
<div class="t" style="left:3529.8px;top:2092.3px;font-size:28px;color:#f2f2f2;font-weight:400;transform:scaleX(1.0585);">1/7/2022</div>
<svg class="a" style="left:3692px;top:2064px;" width="41" height="42" viewBox="0 0 41 42"><path d="M2 2 H39 V34 H24 L20 39 L16 34 H2 Z" fill="none" stroke="#f0f0f0" stroke-width="2.4" stroke-linejoin="round"/></svg>
<div class="a" style="left:3778px;top:2038px;width:2px;height:94px;background:#6a6a6a;"></div>
</body></html>
